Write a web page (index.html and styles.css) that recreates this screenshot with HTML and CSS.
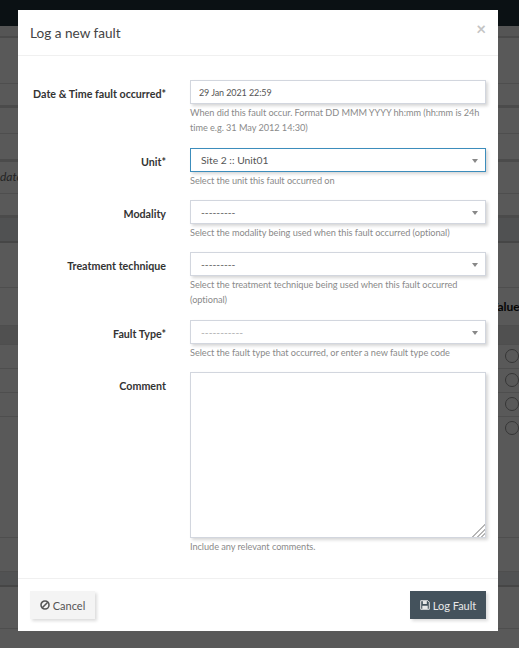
FILE: index.html
```html
<!DOCTYPE html>
<html lang="en">
<head>
    <meta charset="UTF-8">
    <meta name="viewport" content="width=device-width, initial-scale=1.0">
    <title>Log a new fault</title>
    <link rel="stylesheet" href="styles.css">
</head>
<body>
    <!-- Page behind the modal -->
    <div class="page">
        <div class="topbar"></div>
        <div class="row row-head"></div>
        <div class="row row-46"></div>
        <div class="row row-24 row-edge"></div>
        <div class="row row-26"></div>
        <div class="row row-28 row-edge"></div>
        <div class="row row-32"><em class="update-text">date</em></div>
        <div class="row row-24 row-edge"></div>
        <div class="row row-band"></div>
        <div class="row row-45"></div>
        <div class="row row-38"><strong class="value-text">Value</strong></div>
        <div class="row row-19 row-shade"></div>
        <div class="row row-24"><span class="radio"></span></div>
        <div class="row row-24"><span class="radio"></span></div>
        <div class="row row-24"><span class="radio"></span></div>
        <div class="row row-121"><span class="radio"></span></div>
        <div class="row row-34"></div>
        <div class="row row-band-low"></div>
        <div class="row row-42"></div>
    </div>

    <div class="backdrop"></div>

    <!-- Modal -->
    <div class="modal">
        <div class="modal-header">
            <h4 class="modal-title">Log a new fault</h4>
            <span class="close">&times;</span>
        </div>
        <form class="modal-body">
            <div class="form-row">
                <label class="form-label">Date &amp; Time fault occurred*</label>
                <div class="form-field">
                    <input class="form-control date-input" type="text" value="29 Jan 2021 22:59">
                    <p class="help help-long">When did this fault occur. Format DD MMM YYYY hh:mm (hh:mm is 24h time e.g. 31 May 2012 14:30)</p>
                </div>
            </div>
            <div class="form-row">
                <label class="form-label">Unit*</label>
                <div class="form-field">
                    <div class="select focused"><span>Site 2 :: Unit01</span></div>
                    <p class="help">Select the unit this fault occurred on</p>
                </div>
            </div>
            <div class="form-row">
                <label class="form-label">Modality</label>
                <div class="form-field">
                    <div class="select"><span>---------</span></div>
                    <p class="help">Select the modality being used when this fault occurred (optional)</p>
                </div>
            </div>
            <div class="form-row">
                <label class="form-label">Treatment technique</label>
                <div class="form-field">
                    <div class="select"><span>---------</span></div>
                    <p class="help help-long">Select the treatment technique being used when this fault occurred (optional)</p>
                </div>
            </div>
            <div class="form-row">
                <label class="form-label">Fault Type*</label>
                <div class="form-field">
                    <div class="select placeholder"><span>-----------</span></div>
                    <p class="help">Select the fault type that occurred, or enter a new fault type code</p>
                </div>
            </div>
            <div class="form-row">
                <label class="form-label">Comment</label>
                <div class="form-field">
                    <div class="comment-box">
                        <textarea class="form-control comment"></textarea>
                        <span class="grip"></span>
                    </div>
                    <p class="help">Include any relevant comments.</p>
                </div>
            </div>
        </form>
        <div class="modal-footer">
            <button class="btn btn-cancel" type="button">
                <svg class="icon" viewBox="0 0 14 14"><circle cx="7" cy="7" r="5.6" fill="none" stroke="currentColor" stroke-width="2.2"/><path d="M3.2 10.8l7.6-7.6" stroke="currentColor" stroke-width="2.2"/></svg>
                Cancel
            </button>
            <button class="btn btn-log" type="button">
                <svg class="icon" viewBox="0 0 14 14"><path d="M1 1h10l2 2v10H1z" fill="none" stroke="currentColor" stroke-width="1.4"/><path d="M4 1.5h5.5v4H4zM3.2 8h7.6v4.5H3.2z" fill="currentColor"/></svg>
                Log Fault
            </button>
        </div>
    </div>
</body>
</html>
```

FILE: styles.css
```css
* {
    box-sizing: border-box;
}

html, body {
    height: 100%;
}

body {
    margin: 0;
    overflow: hidden;
    background-color: #fff;
    font-family: "Lato", "Noto Sans", sans-serif;
    color: #333;
}

/* Page behind the modal */
.page {
    height: 648px;
    overflow: hidden;
}

.topbar {
    height: 26px;
    background-color: #223339;
}

.row {
    border-bottom: 1px solid #e0e0e0;
    position: relative;
    font-size: 12px;
}

.row-head { height: 12px; background-color: #f2f2f2; border-bottom: 2px solid #d5d5d5; }
.row-46 { height: 46px; }
.row-24 { height: 24px; }
.row-26 { height: 26px; }
.row-28 { height: 28px; }
.row-32 { height: 32px; }
.row-45 { height: 45px; }
.row-38 { height: 38px; }
.row-19 { height: 19px; }
.row-121 { height: 121px; }
.row-34 { height: 34px; }
.row-42 { height: 42px; }

.row-edge {
    border-bottom: 3px solid #d8d8d8;
}

.row-band {
    height: 25px;
    background-color: #e4e8ec;
    border-bottom: 2px solid #c8c8c8;
}

.row-band-low {
    height: 15px;
    background-color: #e8ebee;
    border-bottom: 2px solid #c8c8c8;
}

.row-shade {
    background-color: #e6e6e6;
}

.update-text {
    position: absolute;
    left: 0;
    top: 7px;
    color: #666;
}

.value-text {
    position: absolute;
    left: 490px;
    top: 11px;
    color: #111;
}

.radio {
    position: absolute;
    left: 505px;
    top: 4px;
    width: 14px;
    height: 14px;
    border: 1px solid #999;
    border-radius: 50%;
}

.backdrop {
    position: fixed;
    left: 0;
    top: 0;
    width: 100%;
    height: 100%;
    background-color: rgba(0, 0, 0, 0.65);
}

/* Modal */
.modal {
    position: absolute;
    left: 18px;
    top: 10px;
    width: 480px;
    height: 621px;
    background-color: #fff;
    display: flex;
    flex-direction: column;
}

.modal-header {
    height: 46px;
    padding: 0 12px;
    border-bottom: 1px solid #f0f0f0;
    display: flex;
    justify-content: space-between;
    align-items: center;
}

.modal-title {
    margin: 0;
    font-size: 13.6px;
    font-weight: 400;
    color: #444;
}

.close {
    font-size: 17px;
    font-weight: bold;
    color: #c4c4c4;
    margin-top: -8px;
}

.modal-body {
    flex: 1;
    padding: 24px 12px 0;
}

.form-row {
    display: flex;
    margin-bottom: 12px;
}

.form-label {
    width: 136px;
    margin-right: 24px;
    padding-top: 6px;
    text-align: right;
    font-size: 10.7px;
    line-height: 15px;
    font-weight: 700;
    color: #333;
    white-space: nowrap;
}

.form-field {
    width: 296px;
}

.form-control {
    display: block;
    width: 100%;
    border: 1px solid #d2d6de;
    border-radius: 0;
    box-shadow: 2px 2px 3px rgba(0, 0, 0, 0.16);
    font-family: inherit;
    color: #555;
    outline: none;
    background-color: #fff;
}

.date-input {
    height: 24px;
    padding: 0 8px;
    font-size: 9px;
    letter-spacing: -0.1px;
}

.select {
    position: relative;
    height: 24px;
    padding: 0 10px;
    border: 1px solid #d2d6de;
    box-shadow: 2px 2px 3px rgba(0, 0, 0, 0.16);
    font-size: 10.3px;
    line-height: 23px;
    color: #555;
}

/* Select arrow */
.select::after {
    content: "";
    position: absolute;
    right: 7px;
    top: 10px;
    border-left: 3.5px solid transparent;
    border-right: 3.5px solid transparent;
    border-top: 4px solid #888;
}

.select.focused {
    border-color: #3c8dbc;
}

.select.placeholder {
    color: #aaa;
}

.comment-box {
    position: relative;
}

.comment {
    height: 166px;
    resize: none;
}

.grip {
    position: absolute;
    right: 1px;
    bottom: 1px;
    width: 14px;
    height: 14px;
    background: repeating-linear-gradient(135deg, #fff 0, #fff 1.5px, #b5b5b5 1.5px, #b5b5b5 3px);
    clip-path: polygon(100% 0, 100% 100%, 0 100%);
}

.help {
    margin: 0;
    padding-top: 0.5px;
    font-size: 9.2px;
    letter-spacing: -0.05px;
    line-height: 15.5px;
    color: #8a8a8a;
}

.help-long {
    padding-bottom: 0.5px;
}

.modal-footer {
    height: 53px;
    padding: 12px 12px 0;
    border-top: 1px solid #f0f0f0;
    display: flex;
    justify-content: space-between;
    align-items: flex-start;
}

.btn {
    height: 28px;
    border: none;
    border-radius: 0;
    padding: 0;
    font-family: inherit;
    font-size: 11px;
    white-space: nowrap;
    display: inline-flex;
    justify-content: center;
    align-items: center;
    gap: 3px;
    box-shadow: 2px 2px 3px rgba(0, 0, 0, 0.14);
}

.btn-cancel {
    width: 65px;
    background-color: #f4f4f4;
    color: #555;
}

.btn-log {
    width: 76px;
    background-color: #44525c;
    color: #e8e8e8;
}

.icon {
    width: 10px;
    height: 10px;
    flex: none;
}
```
